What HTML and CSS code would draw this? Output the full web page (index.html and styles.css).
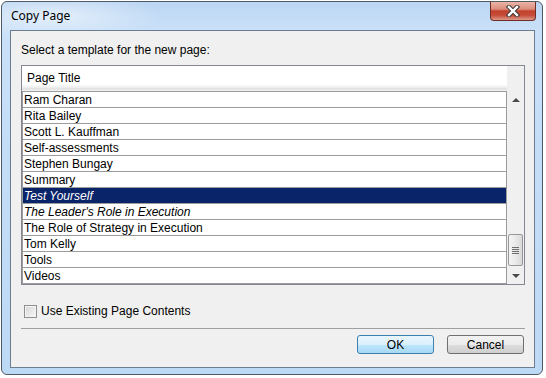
FILE: index.html
```html
<!DOCTYPE html>
<html lang="en">
  <head>
    <title>Copy Page</title>
    <meta charset="UTF-8" />
    <link rel="stylesheet" href="styles.css">
  </head>
  <body>
    <div class="window">
      <div class="titlebar">
        <span class="title">Copy Page</span>
        <button class="close">
          <svg width="16" height="12" viewBox="0 0 16 12">
            <path d="M4 2 L12 10 M12 2 L4 10" stroke="#3a3a3a" stroke-width="4.4" stroke-linecap="square" />
            <path d="M4 2 L12 10 M12 2 L4 10" stroke="#fff" stroke-width="2.4" stroke-linecap="square" />
          </svg>
        </button>
      </div>
      <div class="content">
        <p class="prompt">Select a template for the new page:</p>
        <div class="list">
          <div class="table">
            <div class="header">Page Title</div>
            <div class="row">Ram Charan</div>
            <div class="row">Rita Bailey</div>
            <div class="row">Scott L. Kauffman</div>
            <div class="row">Self-assessments</div>
            <div class="row">Stephen Bungay</div>
            <div class="row">Summary</div>
            <div class="row selected italic">Test Yourself</div>
            <div class="row italic">The Leader's Role in Execution</div>
            <div class="row">The Role of Strategy in Execution</div>
            <div class="row">Tom Kelly</div>
            <div class="row">Tools</div>
            <div class="row last">Videos</div>
          </div>
          <div class="scrollbar">
            <div class="scroll-head"></div>
            <div class="arrow"><span class="tri up"></span></div>
            <div class="track"><div class="thumb"><span></span><span></span><span></span><span></span></div></div>
            <div class="arrow"><span class="tri down"></span></div>
          </div>
        </div>
        <label class="option"><span class="checkbox"></span>Use Existing Page Contents</label>
        <div class="separator"></div>
        <div class="buttons">
          <button class="btn default">OK</button>
          <button class="btn">Cancel</button>
        </div>
      </div>
    </div>
  </body>
</html>
```

FILE: styles.css
```css
* {
  box-sizing: border-box;
  margin: 0;
  padding: 0;
}
body {
  background: #fff;
  font-family: "Liberation Sans", Arial, sans-serif;
  font-size: 12px;
  color: #000;
  padding: 1px;
}
.window {
  width: 542px;
  height: 374px;
  border: 1px solid #4f5964;
  border-radius: 6px;
  display: flex;
  flex-direction: column;
  background:
    radial-gradient(ellipse 110px 22px at 50px 14px, rgba(255, 255, 255, 0.55), rgba(255, 255, 255, 0)),
    linear-gradient(180deg, #bcd6f3 0, #c9e0f8 28px, #bcd9f6 100%);
}
.titlebar {
  height: 28px;
  display: flex;
  justify-content: space-between;
  align-items: flex-start;
  padding: 0 6px 0 9px;
}
.title {
  font-family: "Noto Sans", sans-serif;
  font-size: 12px;
  line-height: 28px;
  color: #000;
}
.close {
  width: 46px;
  height: 19px;
  border: 1px solid #6f2d25;
  border-top: none;
  border-radius: 0 0 4px 4px;
  background: linear-gradient(180deg, #eab5a8 0, #dc8c7b 40%, #c2402b 50%, #c64f3c 75%, #df9a89 100%);
  display: flex;
  align-items: center;
  justify-content: center;
}
.content {
  flex: 1;
  margin: 0 7px 6px 8px;
  border: 1px solid #6b7d8f;
  background: #f0f0f0;
  padding: 12px 9px 0 10px;
}
.prompt {
  line-height: 14px;
  margin-bottom: 8px;
}
.list {
  height: 220px;
  border: 1px solid #828790;
  background: #fff;
  display: flex;
}
.table {
  width: 485px;
}
.header {
  height: 25px;
  line-height: 25px;
  padding-left: 5px;
  background: linear-gradient(180deg, #fff 0, #fff 19px, #f3f4f6 20px, #ececec 22px, #dcdcdc 23px, #f0f0f0 24px);
}
.row {
  height: 16px;
  line-height: 16px;
  padding-left: 1px;
  border: 1px solid #9c9c9c;
  border-bottom: none;
  white-space: nowrap;
}
.row.last {
  height: 17px;
  border-bottom: 1px solid #9c9c9c;
}
.italic {
  font-style: italic;
}
.selected {
  background: #0a246a;
  color: #fff;
}
.scrollbar {
  width: 17px;
  background: #f0f0f0;
  display: flex;
  flex-direction: column;
}
.scroll-head {
  height: 25px;
}
.arrow {
  height: 17px;
  display: flex;
  align-items: center;
  justify-content: center;
}
.tri {
  width: 0;
  height: 0;
  border-left: 4px solid transparent;
  border-right: 4px solid transparent;
}
.tri.up {
  border-bottom: 4px solid #4a4a4a;
}
.tri.down {
  border-top: 4px solid #4a4a4a;
}
.track {
  flex: 1;
  display: flex;
  flex-direction: column;
  justify-content: flex-end;
  align-items: center;
  padding-bottom: 1px;
}
.thumb {
  width: 15px;
  height: 32px;
  border: 1px solid #979797;
  border-radius: 2px;
  background: linear-gradient(90deg, #f4f4f4 0, #e9e9e9 50%, #d9d9d9 100%);
  display: flex;
  flex-direction: column;
  align-items: center;
  justify-content: center;
  gap: 1px;
}
.thumb span {
  width: 7px;
  height: 1px;
  background: #6f6f6f;
}
.option {
  display: flex;
  align-items: center;
  height: 14px;
  margin-top: 19px;
  padding-left: 3px;
  gap: 4px;
}
.checkbox {
  width: 13px;
  height: 13px;
  border: 1px solid #8e8f8f;
  background: linear-gradient(135deg, #d6d6d6, #f7f7f7);
  box-shadow: inset 0 0 0 1px #f4f4f4;
}
.separator {
  height: 1px;
  background: #a0a0a0;
  margin-top: 10px;
}
.buttons {
  display: flex;
  justify-content: flex-end;
  gap: 13px;
  margin-top: 6px;
  padding-right: 1px;
}
.btn {
  width: 77px;
  height: 19px;
  border: 1px solid #707070;
  border-radius: 3px;
  font-family: "Liberation Sans", Arial, sans-serif;
  font-size: 12px;
  color: #000;
  background: linear-gradient(180deg, #f2f2f2 0, #ebebeb 50%, #dddddd 51%, #cfcfcf 100%);
}
.btn.default {
  border-color: #3c7fb1;
  background: linear-gradient(180deg, #eaf6fd 0, #d9f0fc 50%, #bee6fd 51%, #a7d9f5 100%);
}
```
